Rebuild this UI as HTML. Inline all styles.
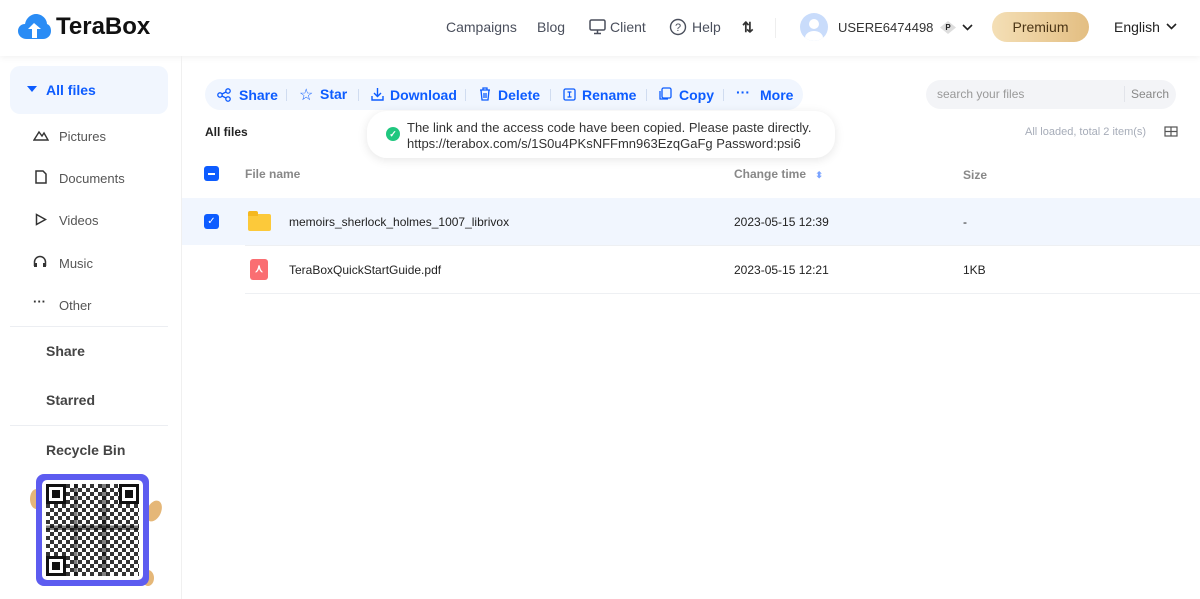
<!DOCTYPE html>
<html><head><meta charset="utf-8"><style>
*{box-sizing:border-box;margin:0;padding:0}
body{width:1200px;height:599px;overflow:hidden;background:#fff;font-family:"Liberation Sans",Arial,sans-serif;position:relative;color:#222}
.hdr{position:absolute;left:0;top:0;width:1200px;height:56px;background:#fff;box-shadow:0 2px 6px rgba(0,0,0,.05)}
.abs{position:absolute}
.nav{font-size:14px;color:#4a4f5c;top:19px}
.side{position:absolute;left:0;top:56px;width:182px;height:543px;border-right:1px solid #f0f0f0}
.si{position:absolute;left:59px;font-size:13px;color:#555}
.sb{position:absolute;left:46px;font-size:14px;font-weight:bold;color:#444}
.hr{position:absolute;left:10px;width:158px;height:1px;background:#eceef2}
.tb{position:absolute;left:205px;top:79px;width:598px;height:31px;background:#f1f6fe;border-radius:16px}
.tbi{position:absolute;top:8px;font-size:14px;font-weight:bold;color:#0d5cff}
.sep{position:absolute;top:10px;width:1px;height:12px;background:#d0dcf0}
.row{position:absolute;left:182px;width:1018px}
</style></head><body>
<div class="hdr"></div>
<svg class="abs" style="left:18px;top:14px" width="33" height="26" viewBox="0 0 33 26"><path d="M9 25C3 25 0 21 0 17c0-4 3-7 7-7 1-6 6-10 11-10 6 0 11 5 11 10 3 1 4 4 4 7 0 5-4 8-8 8z" fill="#2a8cf5"/><path d="M16 9l-6 6h4v9h5v-9h4z" fill="#fff"/></svg>
<div class="abs" style="left:56px;top:13px;font-size:24px;font-weight:bold;color:#111">TeraBox</div>
<div class="abs nav" style="left:446px">Campaigns</div>
<div class="abs nav" style="left:537px">Blog</div>
<svg class="abs" style="left:589px;top:19px" width="17" height="16" viewBox="0 0 17 16"><rect x="1" y="1" width="15" height="10" rx="1.5" fill="none" stroke="#4a4f5c" stroke-width="1.5"/><path d="M8.5 11v3M5 14.5h7" stroke="#4a4f5c" stroke-width="1.5"/></svg>
<div class="abs nav" style="left:610px">Client</div>
<svg class="abs" style="left:669px;top:18px" width="18" height="18"><circle cx="9" cy="9" r="7.5" fill="none" stroke="#4a4f5c" stroke-width="1.4"/><text x="9" y="13" font-size="11" text-anchor="middle" fill="#4a4f5c" font-family="Liberation Sans">?</text></svg>
<div class="abs nav" style="left:692px">Help</div>
<div class="abs nav" style="left:742px;font-weight:bold;color:#333">⇅</div>
<div class="abs" style="left:775px;top:18px;width:1px;height:20px;background:#eee"></div>
<div class="abs" style="left:800px;top:13px;width:28px;height:28px;border-radius:50%;background:#c9dcfb;overflow:hidden"><div class="abs" style="left:9px;top:6px;width:10px;height:10px;border-radius:50%;background:#fff"></div><div class="abs" style="left:5px;top:18px;width:18px;height:14px;border-radius:50%;background:#fff"></div></div>
<div class="abs nav" style="left:838px;color:#333;font-size:13px;top:20px">USERE6474498</div>
<div class="abs" style="left:940px;top:21px;width:16px;height:13px;background:#ddd;clip-path:polygon(50% 0,100% 50%,50% 100%,0 50%);font-size:8px;font-weight:bold;text-align:center;line-height:13px">P</div>
<svg class="abs" style="left:962px;top:24px" width="11" height="8"><path d="M1 1l4.5 4.5L10 1" fill="none" stroke="#222" stroke-width="1.6"/></svg>
<div class="abs" style="left:992px;top:12px;width:97px;height:30px;border-radius:15px;background:linear-gradient(90deg,#f4dfb6,#e3be82);font-size:14px;color:#4a3415;text-align:center;line-height:31px">Premium</div>
<div class="abs nav" style="left:1114px;color:#222">English</div>
<svg class="abs" style="left:1166px;top:23px" width="11" height="8"><path d="M1 1l4.5 4.5L10 1" fill="none" stroke="#222" stroke-width="1.6"/></svg>

<div class="side"></div>
<div class="abs" style="left:10px;top:66px;width:158px;height:48px;border-radius:10px;background:#f1f6fe"></div>
<div class="abs" style="left:27px;top:86px;width:0;height:0;border-left:5px solid transparent;border-right:5px solid transparent;border-top:6px solid #0d5cff"></div>
<div class="abs" style="left:46px;top:82px;font-size:14px;font-weight:bold;color:#0d5cff">All files</div>
<svg class="abs" style="left:33px;top:129px" width="16" height="12"><path d="M1 11L6 3l3 4 2-3 4 7z" fill="none" stroke="#333" stroke-width="1.4"/></svg>
<div class="si" style="top:129px">Pictures</div>
<svg class="abs" style="left:35px;top:170px" width="12" height="14"><path d="M1 1h7l3 3v9H1z" fill="none" stroke="#333" stroke-width="1.5"/></svg>
<div class="si" style="top:171px">Documents</div>
<svg class="abs" style="left:35px;top:213px" width="12" height="13"><path d="M1.5 1.5v10l9-5z" fill="none" stroke="#333" stroke-width="1.5"/></svg>
<div class="si" style="top:213px">Videos</div>
<svg class="abs" style="left:33px;top:255px" width="14" height="13"><path d="M1.5 11V7a5.5 5.5 0 0111 0v4" fill="none" stroke="#333" stroke-width="1.5"/><rect x="1" y="8" width="3" height="4" fill="#333"/><rect x="10" y="8" width="3" height="4" fill="#333"/></svg>
<div class="si" style="top:256px">Music</div>
<div class="abs" style="left:33px;top:294px;font-size:13px;font-weight:bold;color:#333">···</div>
<div class="si" style="top:298px">Other</div>
<div class="hr" style="top:326px"></div>
<div class="sb" style="top:343px">Share</div>
<div class="sb" style="top:392px">Starred</div>
<div class="hr" style="top:425px"></div>
<div class="sb" style="top:442px">Recycle Bin</div>
<div class="abs" style="left:30px;top:489px;width:13px;height:20px;border-radius:50%;background:#e5b778"></div>
<div class="abs" style="left:147px;top:500px;width:14px;height:22px;border-radius:50%;background:#e5b778;transform:rotate(25deg)"></div>
<div class="abs" style="left:142px;top:570px;width:12px;height:16px;border-radius:50%;background:#e5b778"></div>
<div class="abs" style="left:36px;top:474px;width:113px;height:112px;border-radius:8px;background:#5d5cf0"></div>
<div class="abs" style="left:42px;top:480px;width:101px;height:100px;border-radius:5px;background:#fff"></div>
<div class="abs" style="left:46px;top:484px;width:93px;height:92px;background:repeating-conic-gradient(#111 0 25%,#fff 0 50%) 0 0/8px 8px,#111;opacity:.85"></div>
<div class="abs" style="left:46px;top:484px;width:93px;height:92px;background:linear-gradient(90deg,transparent 0 30%,rgba(0,0,0,.5) 30% 34%,transparent 34% 60%,rgba(0,0,0,.5) 60% 65%,transparent 65%),linear-gradient(transparent 0 45%,rgba(0,0,0,.5) 45% 50%,transparent 50%)"></div>
<div class="abs" style="left:46px;top:484px;width:20px;height:20px;border:3px solid #111;background:#fff;box-shadow:inset 0 0 0 3px #fff,inset 0 0 0 10px #111"></div>
<div class="abs" style="left:119px;top:484px;width:20px;height:20px;border:3px solid #111;background:#fff;box-shadow:inset 0 0 0 3px #fff,inset 0 0 0 10px #111"></div>
<div class="abs" style="left:46px;top:556px;width:20px;height:20px;border:3px solid #111;background:#fff;box-shadow:inset 0 0 0 3px #fff,inset 0 0 0 10px #111"></div>

<div class="tb">
<svg class="abs" style="left:12px;top:9px" width="14" height="14"><circle cx="3" cy="7" r="2.2" fill="none" stroke="#0d5cff" stroke-width="1.3"/><circle cx="11" cy="3" r="2.2" fill="none" stroke="#0d5cff" stroke-width="1.3"/><circle cx="11" cy="11" r="2.2" fill="none" stroke="#0d5cff" stroke-width="1.3"/><path d="M5 6l4-2M5 8l4 2" stroke="#0d5cff" stroke-width="1.3"/></svg>
<div class="tbi" style="left:34px">Share</div><div class="sep" style="left:81px"></div>
<div class="tbi" style="left:94px;top:6px;font-size:16px;font-weight:normal">☆</div>
<div class="tbi" style="left:115px;top:7px">Star</div><div class="sep" style="left:153px"></div>
<svg class="abs" style="left:166px;top:8px" width="13" height="14"><path d="M6.5 1v8M3 6l3.5 3.5L10 6M1 9v4h11V9" fill="none" stroke="#0d5cff" stroke-width="1.4"/></svg>
<div class="tbi" style="left:185px">Download</div><div class="sep" style="left:260px"></div>
<svg class="abs" style="left:274px;top:8px" width="12" height="14"><path d="M1 3h10M4 3V1h4v2M2 3l1 10h6l1-10M5 6v5M7 6v5" fill="none" stroke="#0d5cff" stroke-width="1.3"/></svg>
<div class="tbi" style="left:293px">Delete</div><div class="sep" style="left:345px"></div>
<svg class="abs" style="left:358px;top:9px" width="13" height="13"><rect x="1" y="1" width="11" height="11" rx="1.5" fill="none" stroke="#0d5cff" stroke-width="1.3"/><path d="M4.5 4h4M6.5 4v5M4.5 9h4" stroke="#0d5cff" stroke-width="1.2"/></svg>
<div class="tbi" style="left:377px">Rename</div><div class="sep" style="left:441px"></div>
<svg class="abs" style="left:454px;top:8px" width="13" height="14"><rect x="3" y="1" width="9" height="10" rx="1.5" fill="none" stroke="#0d5cff" stroke-width="1.3"/><path d="M1 4v8h8" fill="none" stroke="#0d5cff" stroke-width="1.3"/></svg>
<div class="tbi" style="left:474px">Copy</div><div class="sep" style="left:518px"></div>
<div class="tbi" style="left:531px;top:5px">···</div>
<div class="tbi" style="left:555px">More</div>
</div>

<div class="abs" style="left:926px;top:80px;width:250px;height:29px;border-radius:15px;background:#f3f4f7"></div>
<div class="abs" style="left:937px;top:87px;font-size:12px;color:#999">search your files</div>
<div class="abs" style="left:1124px;top:86px;width:1px;height:16px;background:#e2e4ea"></div>
<div class="abs" style="left:1131px;top:87px;font-size:12px;color:#888">Search</div>
<div class="abs" style="left:205px;top:125px;font-size:12px;font-weight:bold;color:#222">All files</div>
<div class="abs" style="left:1025px;top:126px;font-size:11px;color:#a6acb8">All loaded, total 2 item(s)</div>
<svg class="abs" style="left:1164px;top:126px" width="14" height="11"><rect x="1" y="1" width="12" height="9" fill="none" stroke="#555" stroke-width="1.2"/><path d="M1 5.5h12M7 1v9" stroke="#555" stroke-width="1.2"/></svg>

<div class="abs" style="left:204px;top:166px;width:15px;height:15px;border-radius:3px;background:#0d5cff"><div class="abs" style="left:4px;top:7px;width:7px;height:1.5px;background:#fff"></div></div>
<div class="abs" style="left:245px;top:167px;font-size:12px;font-weight:bold;color:#888">File name</div>
<div class="abs" style="left:734px;top:167px;font-size:12px;font-weight:bold;color:#888">Change time <span style="color:#7aa3ff;font-size:9px;margin-left:6px">⬍</span></div>
<div class="abs" style="left:963px;top:168px;font-size:12px;font-weight:bold;color:#888">Size</div>

<div class="row" style="top:198px;height:47px;background:#f1f6fe"></div>
<div class="abs" style="left:245px;top:245px;width:955px;height:1px;background:#eef0f3"></div>
<div class="abs" style="left:245px;top:293px;width:955px;height:1px;background:#eef0f3"></div>
<div class="abs" style="left:204px;top:214px;width:15px;height:15px;border-radius:3px;background:#0d5cff;color:#fff;font-size:10px;text-align:center;line-height:15px">✓</div>
<div class="abs" style="left:248px;top:214px;width:23px;height:17px;border-radius:2px;background:#fcc93a"></div>
<div class="abs" style="left:248px;top:211px;width:10px;height:5px;border-radius:2px 2px 0 0;background:#f5b81f"></div>
<div class="abs" style="left:289px;top:215px;font-size:12px;color:#222">memoirs_sherlock_holmes_1007_librivox</div>
<div class="abs" style="left:734px;top:215px;font-size:12px;color:#222">2023-05-15 12:39</div>
<div class="abs" style="left:963px;top:215px;font-size:12px;color:#222">-</div>
<div class="abs" style="left:250px;top:259px;width:18px;height:21px;border-radius:3px;background:#fa6e72;color:#fff;font-size:11px;text-align:center;line-height:21px;font-weight:bold">⋏</div>
<div class="abs" style="left:289px;top:263px;font-size:12px;color:#222">TeraBoxQuickStartGuide.pdf</div>
<div class="abs" style="left:734px;top:263px;font-size:12px;color:#222">2023-05-15 12:21</div>
<div class="abs" style="left:963px;top:263px;font-size:12px;color:#222">1KB</div>

<div class="abs" style="left:367px;top:111px;width:468px;height:47px;border-radius:20px;background:#fff;box-shadow:0 2px 10px rgba(0,0,0,.1)"></div>
<div class="abs" style="left:386px;top:127px;width:14px;height:14px;border-radius:50%;background:#20c77f;color:#fff;font-size:9px;text-align:center;line-height:14px;font-weight:bold">✓</div>
<div class="abs" style="left:407px;top:120px;font-size:13px;color:#333;line-height:16px">The link and the access code have been copied. Please paste directly.<br>https://terabox.com/s/1S0u4PKsNFFmn963EzqGaFg Password:psi6</div>
</body></html>
